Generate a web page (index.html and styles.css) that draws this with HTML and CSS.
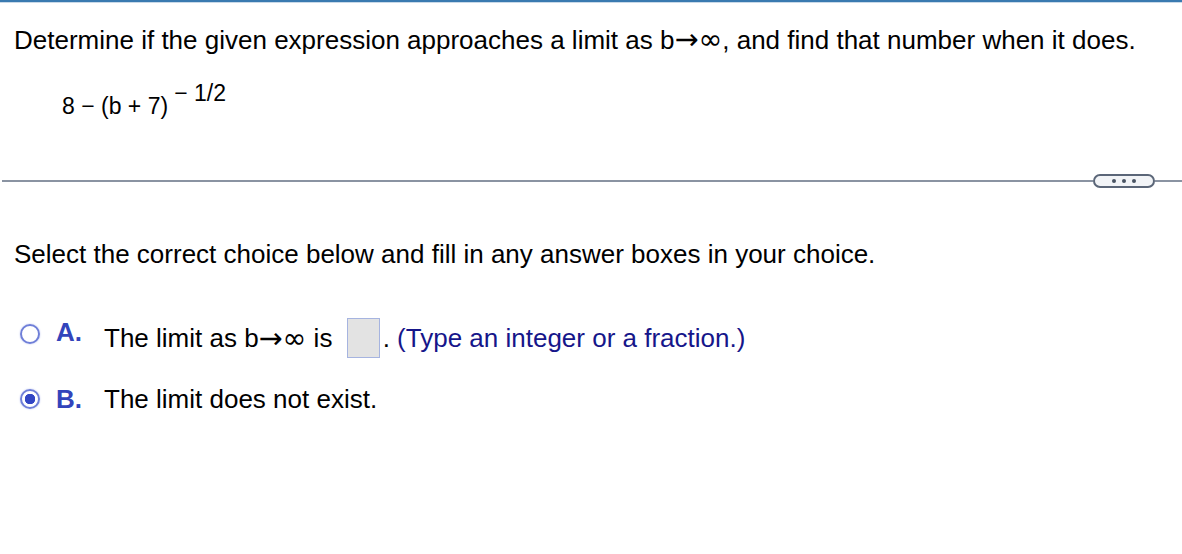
FILE: index.html
```html
<!DOCTYPE html>
<html>
<head>
<meta charset="utf-8">
<link rel="stylesheet" href="styles.css">
</head>
<body>
<div class="topbar"></div>
<div class="question">
  <p class="prompt">Determine if the given expression approaches a limit as b<span class="sym">→∞</span>, and find that number when it does.</p>
  <div class="expr">8 − (b + 7)<sup>− 1/2</sup></div>
</div>
<div class="divider">
  <div class="rule"></div>
  <div class="more"><span></span><span></span><span></span></div>
  <div class="rule tail"></div>
</div>
<div class="answer">
  <p class="instr">Select the correct choice below and fill in any answer boxes in your choice.</p>
  <div class="choice first">
    <span class="radio"></span>
    <span class="letter">A.</span>
    <span class="text">The limit as b<span class="sym">→∞</span> is <span class="box"></span>. <span class="hint">(Type an integer or a fraction.)</span></span>
  </div>
  <div class="choice second">
    <span class="radio on"></span>
    <span class="letter">B.</span>
    <span class="text">The limit does not exist.</span>
  </div>
</div>
</body>
</html>
```
FILE: styles.css
```css
html, body {
  margin: 0;
  padding: 0;
  background: #fff;
  font-family: "Liberation Sans", Arial, sans-serif;
  color: #000;
}
.topbar {
  height: 2px;
  background: #3a7ab0;
  border-bottom: 1px solid #c9d9e8;
}
.sym {
  font-family: "DejaVu Sans", sans-serif;
  font-size: 1.1em;
  line-height: 1;
}
.question {
  padding: 22px 14px 0 14px;
}
.prompt {
  margin: 0;
  font-size: 26px;
  line-height: 30px;
}
.expr {
  margin: 37px 0 0 48px;
  font-size: 23px;
  line-height: 28px;
}
.expr sup {
  font-size: 23px;
  line-height: 1;
  vertical-align: 0;
  position: relative;
  top: -13px;
  margin-left: 6px;
}
.divider {
  display: flex;
  align-items: center;
  margin-top: 54px;
  padding-left: 2px;
  height: 14px;
}
.rule {
  flex: 1;
  height: 2px;
  background: #8a93a2;
}
.rule.tail {
  flex: 0 0 27px;
}
.more {
  width: 62px;
  height: 14px;
  box-sizing: border-box;
  border: 2px solid #5b6678;
  border-radius: 8px;
  background: #f2f4f7;
  display: flex;
  align-items: center;
  justify-content: center;
  gap: 6px;
}
.more span {
  width: 4px;
  height: 4px;
  border-radius: 50%;
  background: #4a5464;
}
.answer {
  padding: 0 14px;
}
.instr {
  margin: 51px 0 0 0;
  font-size: 26px;
  line-height: 30px;
}
.choice {
  display: flex;
  align-items: center;
  font-size: 26px;
  height: 40px;
}
.choice.first {
  margin-top: 49px;
}
.choice.second {
  margin-top: 21px;
}
.radio {
  width: 20px;
  height: 20px;
  border: 2px solid #6f7fd8;
  border-radius: 50%;
  box-sizing: border-box;
  margin-left: 6px;
  box-shadow: 0 0 2px #b8c0ee;
  flex: none;
}
.choice.first .radio {
  margin-top: -8px;
}
.radio.on {
  background: radial-gradient(circle, #3346c4 0 5px, #fff 5.5px);
}
.letter {
  color: #3344bb;
  font-weight: bold;
  width: 64px;
  padding-left: 16px;
  box-sizing: border-box;
  flex: none;
}
.choice.first .letter {
  margin-top: -12px;
}
.text {
  display: flex;
  align-items: center;
  white-space: pre;
}
.box {
  display: inline-block;
  width: 31px;
  height: 38px;
  background: #e3e3e3;
  border: 1px solid #a6b4e0;
  margin: 0 3px 0 7px;
}
.hint {
  color: #16168a;
}
```
